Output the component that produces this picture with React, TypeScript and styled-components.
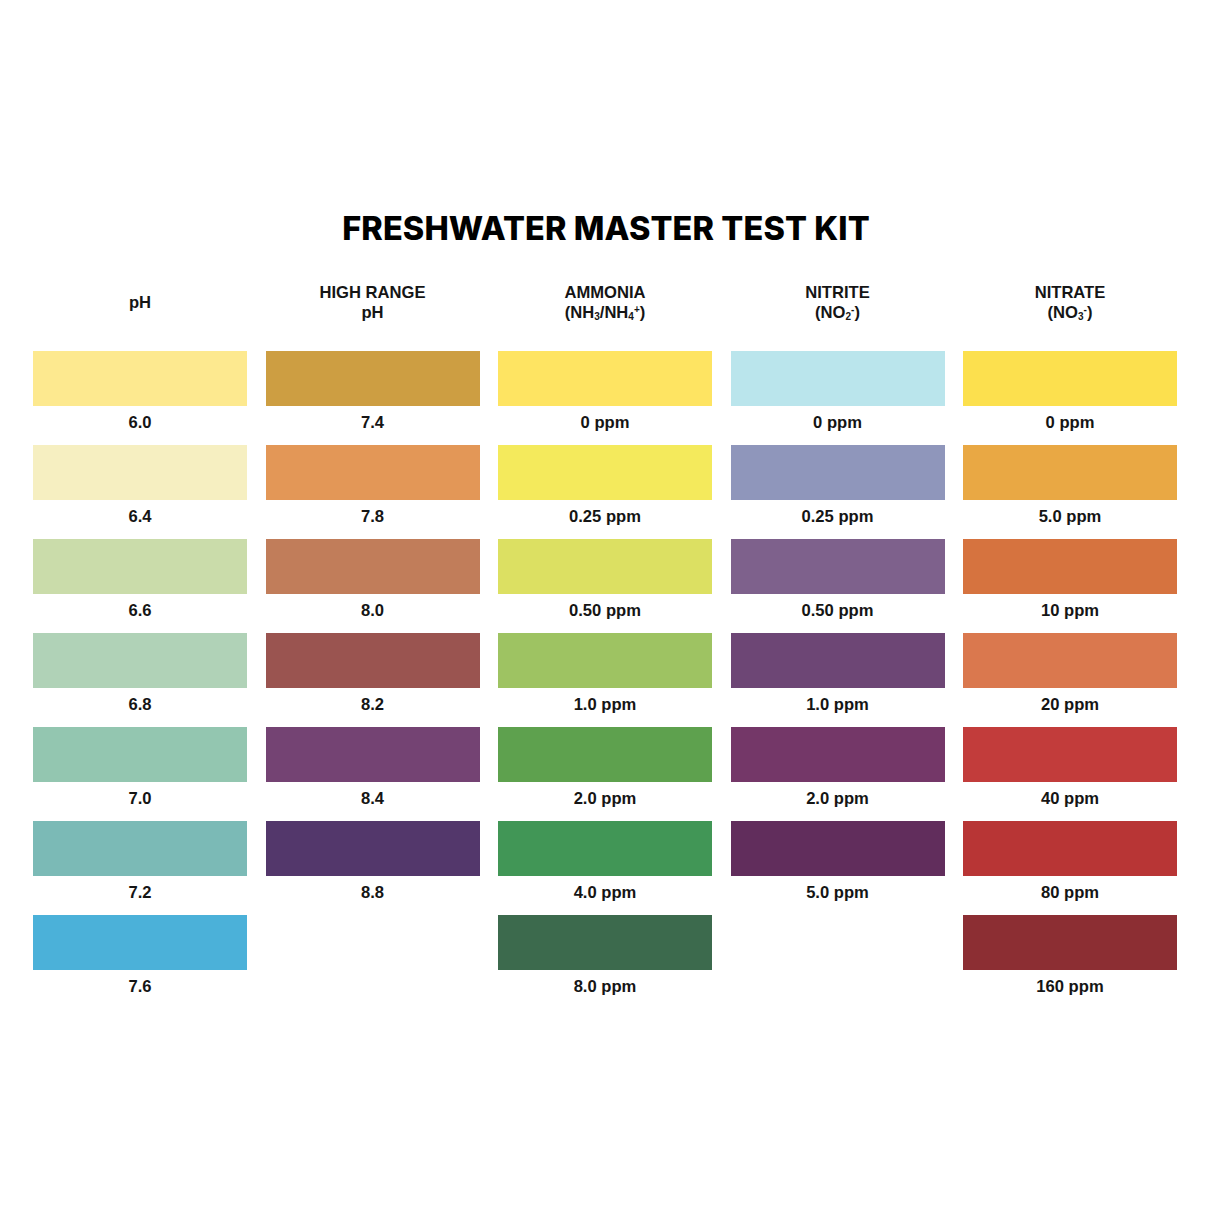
import React from "react";
import styled, { createGlobalStyle } from "styled-components";

const Global = createGlobalStyle`
  html, body { margin: 0; padding: 0; background: #ffffff; }
  body { font-family: "Liberation Sans", Arial, sans-serif; color: #111; }
`;

const Page = styled.div`
  width: 1210px;
  height: 1210px;
  box-sizing: border-box;
  padding-top: 205px;
  display: flex;
  flex-direction: column;
  align-items: center;
`;

const Title = styled.h1`
  margin: 0;
  font-family: Inter, "Liberation Sans", sans-serif;
  font-weight: 800;
  font-size: 32.5px;
  line-height: 48px;
  letter-spacing: 0.1px;
  color: #000;
  margin-left: 2px;
`;

const Grid = styled.div`
  margin-top: 30px;
  display: grid;
  grid-template-columns: repeat(5, 214px);
  column-gap: 18.5px;
`;

const Column = styled.div`
  display: flex;
  flex-direction: column;
`;

const Header = styled.div`
  height: 40px;
  margin-bottom: 28px;
  display: flex;
  flex-direction: column;
  justify-content: center;
  align-items: center;
  font-weight: 700;
  font-size: 16.6px;
  line-height: 20px;
  text-align: center;
  color: #151515;
  sub, sup { font-size: 10px; line-height: 0; }
  sub { vertical-align: -2px; }
  sup { vertical-align: 5px; }
`;

const Cell = styled.div`
  display: flex;
  flex-direction: column;
  height: 94px;
`;

const Swatch = styled.div<{ $c: string }>`
  height: 55px;
  background: ${(p) => p.$c};
`;

const Label = styled.div`
  margin-top: 7px;
  height: 20px;
  line-height: 20px;
  font-weight: 700;
  font-size: 16.6px;
  text-align: center;
  color: #151515;
`;

type Col = { header: React.ReactNode; items: [string, string][] };

const cols: Col[] = [
  {
    header: <span>pH</span>,
    items: [
      ["#FDE98F", "6.0"],
      ["#F6EFC1", "6.4"],
      ["#CADCAA", "6.6"],
      ["#B0D2B7", "6.8"],
      ["#93C6B0", "7.0"],
      ["#7BBAB6", "7.2"],
      ["#4BB1D9", "7.6"],
    ],
  },
  {
    header: (
      <>
        <span>HIGH RANGE</span>
        <span>pH</span>
      </>
    ),
    items: [
      ["#CD9E42", "7.4"],
      ["#E39757", "7.8"],
      ["#C17D5A", "8.0"],
      ["#9A5450", "8.2"],
      ["#744373", "8.4"],
      ["#53376B", "8.8"],
    ],
  },
  {
    header: (
      <>
        <span>AMMONIA</span>
        <span>
          (NH<sub>3</sub>/NH<sub>4</sub>
          <sup>+</sup>)
        </span>
      </>
    ),
    items: [
      ["#FEE462", "0 ppm"],
      ["#F4EA5C", "0.25 ppm"],
      ["#DCE062", "0.50 ppm"],
      ["#9EC362", "1.0 ppm"],
      ["#5EA14E", "2.0 ppm"],
      ["#419656", "4.0 ppm"],
      ["#3C6A4D", "8.0 ppm"],
    ],
  },
  {
    header: (
      <>
        <span>NITRITE</span>
        <span>
          (NO<sub>2</sub>
          <sup>-</sup>)
        </span>
      </>
    ),
    items: [
      ["#BAE5EC", "0 ppm"],
      ["#8F96BB", "0.25 ppm"],
      ["#7E618C", "0.50 ppm"],
      ["#6D4675", "1.0 ppm"],
      ["#743768", "2.0 ppm"],
      ["#612D5C", "5.0 ppm"],
    ],
  },
  {
    header: (
      <>
        <span>NITRATE</span>
        <span>
          (NO<sub>3</sub>
          <sup>-</sup>)
        </span>
      </>
    ),
    items: [
      ["#FCE04E", "0 ppm"],
      ["#E9A844", "5.0 ppm"],
      ["#D6733F", "10 ppm"],
      ["#DA784E", "20 ppm"],
      ["#C23C3B", "40 ppm"],
      ["#B83535", "80 ppm"],
      ["#8C2E33", "160 ppm"],
    ],
  },
];

export default function App() {
  return (
    <>
      <Global />
      <Page>
        <Title>FRESHWATER MASTER TEST KIT</Title>
        <Grid>
          {cols.map((c, i) => (
            <Column key={i}>
              <Header>{c.header}</Header>
              {c.items.map(([color, label]) => (
                <Cell key={label}>
                  <Swatch $c={color} />
                  <Label>{label}</Label>
                </Cell>
              ))}
            </Column>
          ))}
        </Grid>
      </Page>
    </>
  );
}
